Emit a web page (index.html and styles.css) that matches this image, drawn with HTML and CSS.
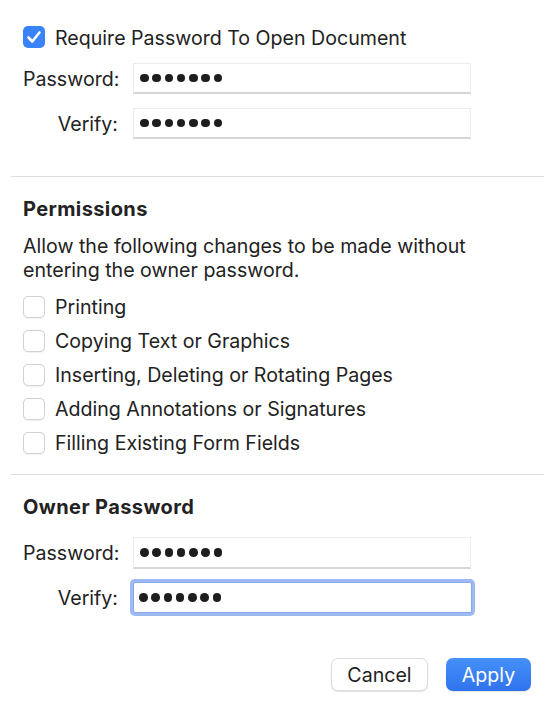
FILE: index.html
```
<!DOCTYPE html>
<html>
<head>
<meta charset="utf-8">
<link rel="stylesheet" href="styles.css">
</head>
<body>
<div class="sheet">
  <section class="sec sec-top">
    <label class="check-row first">
      <span class="box checked"><svg viewBox="0 0 22 22" width="22" height="22"><path d="M5.5 11.5 L9.3 15.5 L16.5 6.5" fill="none" stroke="#fff" stroke-width="2.6" stroke-linecap="round" stroke-linejoin="round"/></svg></span>
      <span class="lbl">Require Password To Open Document</span>
    </label>
    <div class="field-row">
      <span class="flabel">Password:</span>
      <div class="input"><span class="dots"><i></i><i></i><i></i><i></i><i></i><i></i><i></i></span></div>
    </div>
    <div class="field-row second">
      <span class="flabel">Verify:</span>
      <div class="input"><span class="dots"><i></i><i></i><i></i><i></i><i></i><i></i><i></i></span></div>
    </div>
  </section>
  <div class="sep"></div>
  <section class="sec sec-perm">
    <h2 class="heading">Permissions</h2>
    <p class="desc">Allow the following changes to be made without entering the owner password.</p>
    <div class="checks">
      <label class="check-row"><span class="box"></span><span class="lbl">Printing</span></label>
      <label class="check-row"><span class="box"></span><span class="lbl">Copying Text or Graphics</span></label>
      <label class="check-row"><span class="box"></span><span class="lbl">Inserting, Deleting or Rotating Pages</span></label>
      <label class="check-row"><span class="box"></span><span class="lbl">Adding Annotations or Signatures</span></label>
      <label class="check-row"><span class="box"></span><span class="lbl">Filling Existing Form Fields</span></label>
    </div>
  </section>
  <div class="sep sep2"></div>
  <section class="sec sec-owner">
    <h2 class="heading">Owner Password</h2>
    <div class="field-row owner-first">
      <span class="flabel">Password:</span>
      <div class="input"><span class="dots"><i></i><i></i><i></i><i></i><i></i><i></i><i></i></span></div>
    </div>
    <div class="field-row owner-second">
      <span class="flabel">Verify:</span>
      <div class="input focused"><span class="dots"><i></i><i></i><i></i><i></i><i></i><i></i><i></i></span></div>
    </div>
  </section>
  <div class="actions">
    <button class="btn cancel">Cancel</button>
    <button class="btn apply">Apply</button>
  </div>
</div>
</body>
</html>
```

FILE: styles.css
```
html, body {
  margin: 0;
  padding: 0;
  background: #ffffff;
}
body {
  width: 550px;
  height: 716px;
  overflow: hidden;
  font-family: "Inter", "Liberation Sans", sans-serif;
  font-size: 19.6px;
  color: #222222;
}
.sheet {
  display: flex;
  flex-direction: column;
}
.sec {
  padding-left: 23px;
  display: flex;
  flex-direction: column;
}
.sec-top {
  padding-top: 26px;
}
.check-row {
  display: flex;
  align-items: center;
  height: 22px;
  gap: 10px;
}
.check-row.first .lbl {
  padding-top: 2px;
}
.box {
  width: 20px;
  height: 20px;
  border: 1px solid #d2d2d2;
  border-radius: 5px;
  background: #ffffff;
  box-shadow: 0 0.5px 1px rgba(0,0,0,0.06);
  flex: none;
  display: flex;
  align-items: center;
  justify-content: center;
}
.box.checked {
  width: 22px;
  height: 22px;
  border: none;
  background: #3a82f7;
  box-shadow: none;
}
.lbl {
  line-height: 22px;
  white-space: nowrap;
}
.field-row {
  display: flex;
  align-items: center;
  gap: 15px;
  margin-top: 15px;
}
.field-row.second {
  margin-top: 14px;
}
.flabel {
  width: 95px;
  text-align: right;
  flex: none;
}
.input {
  width: 330px;
  height: 28px;
  border: 1px solid #ececec;
  border-bottom: 2px solid #d6d6d6;
  background: #ffffff;
  display: flex;
  align-items: center;
  padding-left: 6px;
  box-sizing: content-box;
}
.input.focused {
  width: 332px;
  border: 1px solid #8aa9ea;
  box-shadow: 0 0 0 3px #9dbaf2;
  border-radius: 2px;
  height: 29px;
  padding-left: 5px;
}
.dots {
  display: flex;
  gap: 3.8px;
}
.dots i {
  display: block;
  width: 8.5px;
  height: 8.5px;
  border-radius: 50%;
  background: #1e1e1e;
}
.sep {
  height: 1px;
  background: #dedede;
  margin: 37px 6px 0 11px;
}
.heading {
  margin: 0;
  font-size: 20px;
  font-weight: 700;
  letter-spacing: 0.4px;
  line-height: 22px;
}
.sec-perm .heading {
  margin-top: 21px;
}
.desc {
  margin: 14px 0 0 0;
  line-height: 24px;
  width: 470px;
}
.checks {
  display: flex;
  flex-direction: column;
  gap: 12px;
  margin-top: 14px;
}
.sep2 {
  margin-top: 20px;
}
.sec-owner .heading {
  margin-top: 21px;
}
.field-row.owner-first {
  margin-top: 19px;
}
.field-row.owner-first .input {
  height: 29px;
}
.field-row.owner-second {
  margin-top: 13px;
}
.actions {
  display: flex;
  justify-content: flex-end;
  gap: 18px;
  padding-right: 19px;
  margin-top: 45px;
}
.btn {
  font-family: "Inter", "Liberation Sans", sans-serif;
  font-size: 19.6px;
  height: 33px;
  border-radius: 7px;
  padding: 0;
  cursor: default;
}
.cancel {
  width: 97px;
  background: #ffffff;
  color: #1e1e1e;
  border: 1px solid #dcdcdc;
  box-shadow: 0 1px 1.5px rgba(0,0,0,0.12);
}
.apply {
  width: 85px;
  border: none;
  color: #ffffff;
  background: linear-gradient(#4590f9, #2f73ee);
  box-shadow: 0 1px 1px rgba(0,0,0,0.1);
}
```
